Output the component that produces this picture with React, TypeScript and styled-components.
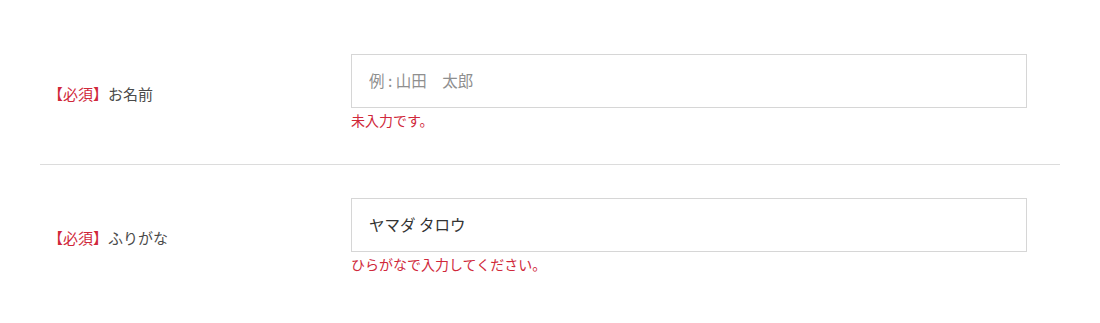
import React from "react";
import styled, { createGlobalStyle } from "styled-components";

const GlobalStyle = createGlobalStyle`
  html, body {
    margin: 0;
    padding: 0;
    background: #fff;
  }
  body {
    font-family: "Noto Sans CJK JP", "Noto Sans", sans-serif;
    color: #444;
  }
  * {
    box-sizing: border-box;
  }
`;

export default function App() {
  return (
    <>
      <GlobalStyle />
      <Form>
        <Row>
          <Label>
            <Required>【必須】</Required>お名前
          </Label>
          <Field>
            <Input type="text" placeholder="例 : 山田　太郎" />
            <ErrorText>未入力です。</ErrorText>
          </Field>
        </Row>
        <Row $last>
          <Label>
            <Required>【必須】</Required>ふりがな
          </Label>
          <Field>
            <Input type="text" defaultValue="ヤマダ タロウ" />
            <ErrorText>ひらがなで入力してください。</ErrorText>
          </Field>
        </Row>
      </Form>
    </>
  );
}

// Styled Components
const Form = styled.div`
  width: 1020px;
  margin: 0 40px;
  padding-top: 21px;
`;

const Row = styled.div<{ $last?: boolean }>`
  display: flex;
  align-items: center;
  padding: 33px 0;
  border-bottom: ${(p) => (p.$last ? "none" : "1px solid #dcdcdc")};
`;

const Label = styled.div`
  width: 311px;
  flex-shrink: 0;
  padding-left: 8px;
  padding-top: 4px;
  font-size: 15px;
  line-height: 1.5;
  color: #4a4a4a;
`;

const Required = styled.span`
  color: #d0283a;
`;

const Field = styled.div`
  width: 676px;
  display: flex;
  flex-direction: column;
`;

const Input = styled.input`
  width: 100%;
  height: 54px;
  padding: 0 17px 2px;
  border: 1px solid #d6d6d6;
  border-radius: 0;
  outline: none;
  font-family: "Noto Sans CJK JP", "Noto Sans", sans-serif;
  font-size: 15.5px;
  color: #333;
  background: #fff;

  &::placeholder {
    color: #8f8f8f;
  }
`;

const ErrorText = styled.p`
  margin: 2px 0 0;
  font-size: 14px;
  line-height: 21px;
  color: #d0283a;
`;
